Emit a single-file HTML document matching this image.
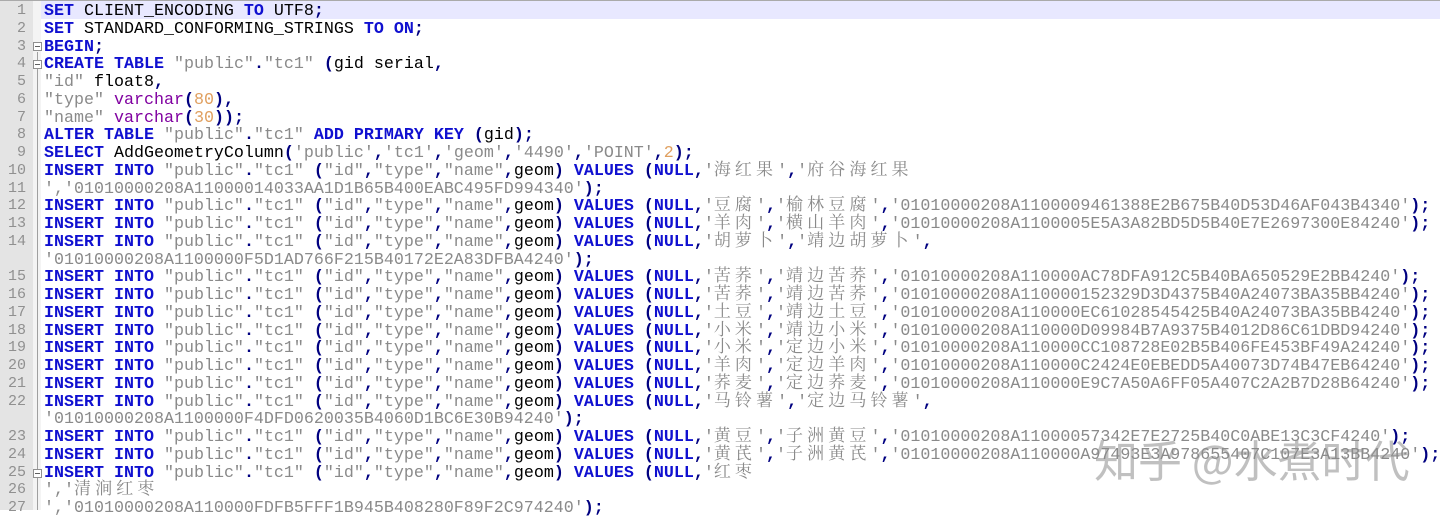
<!DOCTYPE html>
<html><head><meta charset="utf-8"><style>
body{margin:0;width:1440px;height:510px;overflow:hidden;background:#fff;position:relative}
.g{position:absolute;left:0;top:0;width:33px;height:510px;background:#e4e4e4}
.fm{position:absolute;left:33px;top:0;width:8px;height:510px;background:#f4f4f4}
.fl{position:absolute;left:37px;top:52px;width:1px;height:458px;background:#a0a0a0}
.hl{position:absolute;left:41px;top:1px;width:1399px;height:18px;background:#e8e8ff}
.top{position:absolute;left:0;top:0;width:1440px;height:1px;background:#aaa}
.r{position:absolute;left:44px;height:18px;line-height:18px;font:16.67px "Liberation Mono",monospace;color:#000;white-space:pre;margin-top:1px}
.n{position:absolute;left:0;width:26px;text-align:right;font:15px "Liberation Mono",monospace;color:#909090;line-height:18px;margin-top:1px}
.k{color:#1010d0;font-weight:bold}
.p{color:#000080;font-weight:bold}
.s{color:#8a8a8a}
.v{color:#8000a0}
.d{color:#e0a060}
.c{font-family:"Noto Serif CJK SC","Noto Sans CJK SC",serif;font-size:17px;letter-spacing:4.1px;color:#8a8a8a;line-height:0}
.box{position:absolute;left:33px;width:7px;height:7px;border:1px solid #909090;background:#fff}
.box:after{content:"";position:absolute;left:1px;top:3px;width:5px;height:1px;background:#606060}
.wm{position:absolute;left:1094px;top:428px;font:44px "Noto Sans CJK SC",sans-serif;line-height:60px;color:rgba(140,140,140,0.55);white-space:nowrap}
</style></head><body>
<div class="g"></div><div class="fm"></div><div class="fl"></div><div class="hl"></div><div class="top"></div>
<div class="box" style="top:42px"></div>
<div class="box" style="top:60px"></div>
<div class="box" style="top:469px"></div>
<div class="n" style="top:1px">1</div><div class="n" style="top:19px">2</div><div class="n" style="top:37px">3</div><div class="n" style="top:54px">4</div><div class="n" style="top:72px">5</div><div class="n" style="top:90px">6</div><div class="n" style="top:108px">7</div><div class="n" style="top:125px">8</div><div class="n" style="top:143px">9</div><div class="n" style="top:161px">10</div><div class="n" style="top:179px">11</div><div class="n" style="top:196px">12</div><div class="n" style="top:214px">13</div><div class="n" style="top:232px">14</div><div class="n" style="top:267px">15</div><div class="n" style="top:285px">16</div><div class="n" style="top:303px">17</div><div class="n" style="top:321px">18</div><div class="n" style="top:338px">19</div><div class="n" style="top:356px">20</div><div class="n" style="top:374px">21</div><div class="n" style="top:392px">22</div><div class="n" style="top:427px">23</div><div class="n" style="top:445px">24</div><div class="n" style="top:463px">25</div><div class="n" style="top:480px">26</div><div class="n" style="top:498px">27</div>

<div class="r" style="top:1px"><span class="k">SET</span> CLIENT_ENCODING <span class="k">TO</span> UTF8<span class="p">;</span></div>
<div class="r" style="top:19px"><span class="k">SET</span> STANDARD_CONFORMING_STRINGS <span class="k">TO</span> <span class="k">ON</span><span class="p">;</span></div>
<div class="r" style="top:37px"><span class="k">BEGIN</span><span class="p">;</span></div>
<div class="r" style="top:54px"><span class="k">CREATE</span> <span class="k">TABLE</span> <span class="s">"public"</span><span class="p">.</span><span class="s">"tc1"</span> <span class="p">(</span>gid serial<span class="p">,</span></div>
<div class="r" style="top:72px"><span class="s">"id"</span> float8<span class="p">,</span></div>
<div class="r" style="top:90px"><span class="s">"type"</span> <span class="v">varchar</span><span class="p">(</span><span class="d">80</span><span class="p">),</span></div>
<div class="r" style="top:108px"><span class="s">"name"</span> <span class="v">varchar</span><span class="p">(</span><span class="d">30</span><span class="p">));</span></div>
<div class="r" style="top:125px"><span class="k">ALTER</span> <span class="k">TABLE</span> <span class="s">"public"</span><span class="p">.</span><span class="s">"tc1"</span> <span class="k">ADD</span> <span class="k">PRIMARY</span> <span class="k">KEY</span> <span class="p">(</span>gid<span class="p">);</span></div>
<div class="r" style="top:143px"><span class="k">SELECT</span> AddGeometryColumn<span class="p">(</span><span class="s">'public'</span><span class="p">,</span><span class="s">'tc1'</span><span class="p">,</span><span class="s">'geom'</span><span class="p">,</span><span class="s">'4490'</span><span class="p">,</span><span class="s">'POINT'</span><span class="p">,</span><span class="d">2</span><span class="p">);</span></div>
<div class="r" style="top:161px"><span class="k">INSERT</span> <span class="k">INTO</span> <span class="s">"public"</span><span class="p">.</span><span class="s">"tc1"</span> <span class="p">(</span><span class="s">"id"</span><span class="p">,</span><span class="s">"type"</span><span class="p">,</span><span class="s">"name"</span><span class="p">,</span>geom<span class="p">)</span> <span class="k">VALUES</span> <span class="p">(</span><span class="k">NULL</span><span class="p">,</span><span class="s">'</span><span class="c">海红果</span><span class="s">'</span><span class="p">,</span><span class="s">'</span><span class="c">府谷海红果</span></div>
<div class="r" style="top:179px"><span class="s">','01010000208A11000014033AA1D1B65B400EABC495FD994340'</span><span class="p">);</span></div>
<div id="rows"></div>
<div class="r" style="top:250px"><span class="s">'01010000208A1100000F5D1AD766F215B40172E2A83DFBA4240'</span><span class="p">);</span></div>
<div class="r" style="top:409px"><span class="s">'01010000208A1100000F4DFD0620035B4060D1BC6E30B94240'</span><span class="p">);</span></div>
<div class="r" style="top:480px"><span class="s">','</span><span class="c">清涧红枣</span></div>
<div class="r" style="top:498px"><span class="s">','01010000208A110000FDFB5FFF1B945B408280F89F2C974240'</span><span class="p">);</span></div>
<script>
var P='<span class="k">INSERT</span> <span class="k">INTO</span> <span class="s">"public"</span><span class="p">.</span><span class="s">"tc1"</span> <span class="p">(</span><span class="s">"id"</span><span class="p">,</span><span class="s">"type"</span><span class="p">,</span><span class="s">"name"</span><span class="p">,</span>geom<span class="p">)</span> <span class="k">VALUES</span> <span class="p">(</span><span class="k">NULL</span><span class="p">,</span>';
var R=[[196,'豆腐','榆林豆腐','01010000208A1100009461388E2B675B40D53D46AF043B4340',1],
[214,'羊肉','横山羊肉','01010000208A1100005E5A3A82BD5D5B40E7E2697300E84240',1],
[232,'胡萝卜','靖边胡萝卜','',0],
[267,'苦荞','靖边苦荞','01010000208A110000AC78DFA912C5B40BA650529E2BB4240',1],
[285,'苦荞','靖边苦荞','01010000208A110000152329D3D4375B40A24073BA35BB4240',1],
[303,'土豆','靖边土豆','01010000208A110000EC61028545425B40A24073BA35BB4240',1],
[321,'小米','靖边小米','01010000208A110000D09984B7A9375B4012D86C61DBD94240',1],
[338,'小米','定边小米','01010000208A110000CC108728E02B5B406FE453BF49A24240',1],
[356,'羊肉','定边羊肉','01010000208A110000C2424E0EBEDD5A40073D74B47EB64240',1],
[374,'荞麦','定边荞麦','01010000208A110000E9C7A50A6FF05A407C2A2B7D28B64240',1],
[392,'马铃薯','定边马铃薯','',0],
[427,'黄豆','子洲黄豆','01010000208A11000057342E7E2725B40C0ABE13C3CF4240',1],
[445,'黄芪','子洲黄芪','01010000208A110000A97493E3A978655407C107E3A13BB4240',1],
[463,'红枣','','',2]];
var h='';R.forEach(function(r){var t=P+'<span class="s">\'</span><span class="c">'+r[1]+'</span>';
if(r[4]==2){}else{t+='<span class="s">\'</span><span class="p">,</span><span class="s">\'</span><span class="c">'+r[2]+'</span><span class="s">\'</span><span class="p">,</span>';
if(r[4]==1)t+='<span class="s">\''+r[3]+'\'</span><span class="p">);</span>';}
h+='<div class="r" style="top:'+r[0]+'px">'+t+'</div>';});
document.getElementById('rows').innerHTML=h;
</script>
<div class="wm">知乎 @水煮时代</div>
</body></html>
